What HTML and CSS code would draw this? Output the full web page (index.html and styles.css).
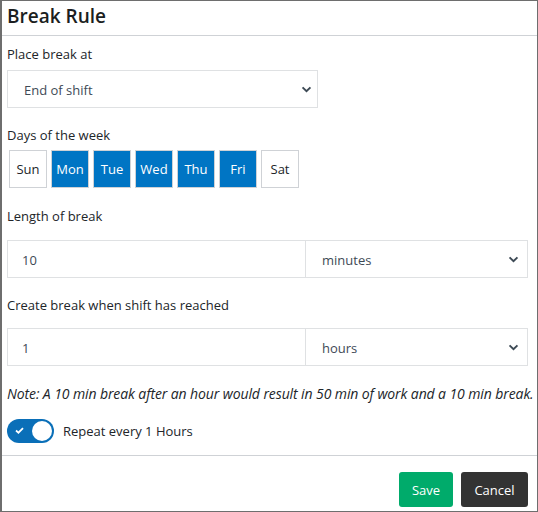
FILE: index.html
```html
<!DOCTYPE html>
<html>
<head>
<meta charset="utf-8">
<link rel="stylesheet" href="styles.css">
</head>
<body>
<div class="dialog">
  <div class="header"><h1 class="title">Break Rule</h1></div>
  <div class="body">
    <div class="label l1">Place break at</div>
    <div class="select select-place"><span>End of shift</span><svg class="chev" viewBox="0 0 12 8" width="11" height="7"><path d="M1.5 1.5 L6 6 L10.5 1.5" fill="none" stroke="#3d4a55" stroke-width="2.2"/></svg></div>

    <div class="label l2">Days of the week</div>
    <div class="days">
      <div class="day">Sun</div>
      <div class="day on">Mon</div>
      <div class="day on">Tue</div>
      <div class="day on">Wed</div>
      <div class="day on">Thu</div>
      <div class="day on">Fri</div>
      <div class="day">Sat</div>
    </div>

    <div class="label l3">Length of break</div>
    <div class="group g1">
      <div class="input">10</div>
      <div class="select select-unit"><span>minutes</span><svg class="chev" viewBox="0 0 12 8" width="11" height="7"><path d="M1.5 1.5 L6 6 L10.5 1.5" fill="none" stroke="#3d4a55" stroke-width="2.2"/></svg></div>
    </div>

    <div class="label l4">Create break when shift has reached</div>
    <div class="group g2">
      <div class="input">1</div>
      <div class="select select-unit"><span>hours</span><svg class="chev" viewBox="0 0 12 8" width="11" height="7"><path d="M1.5 1.5 L6 6 L10.5 1.5" fill="none" stroke="#3d4a55" stroke-width="2.2"/></svg></div>
    </div>

    <div class="note">Note: A 10 min break after an hour would result in 50 min of work and a 10 min break.</div>

    <div class="toggle-row">
      <div class="toggle">
        <svg class="check" viewBox="0 0 10 8" width="9" height="7"><path d="M1 4 L3.8 6.5 L9 1.2" fill="none" stroke="#fff" stroke-width="2"/></svg>
        <div class="knob"></div>
      </div>
      <span>Repeat every 1 Hours</span>
    </div>
  </div>
  <div class="footer">
    <button class="btn save">Save</button>
    <button class="btn cancel">Cancel</button>
  </div>
</div>
</body>
</html>
```
FILE: styles.css
```css
html, body {
  margin: 0;
  padding: 0;
  background: #fff;
}
body {
  font-family: "Open Sans", "Noto Sans", sans-serif;
  font-size: 13px;
  color: #212529;
}
.dialog {
  width: 538px;
  height: 512px;
  box-sizing: border-box;
  border: 1px solid #6e6e6e;
  border-left-width: 2px;
  display: flex;
  flex-direction: column;
}
.header {
  box-sizing: border-box;
  height: 35px;
  flex: none;
  border-bottom: 1px solid #cfd2d6;
  padding-left: 5px;
  display: flex;
  align-items: center;
}
.title {
  margin: 0;
  font-size: 19px;
  font-weight: 600;
  color: #1b1e21;
  line-height: 1;
  margin-top: -4px;
}
.body {
  padding: 0 9px 0 5px;
  flex: 1;
}
.label {
  height: 20px;
  line-height: 20px;
  color: #212529;
}
.l1 { margin-top: 8px; }
.l2 { margin-top: 17px; }
.l3 { margin-top: 18px; }
.l4 { margin-top: 17px; }
.select, .input {
  box-sizing: border-box;
  height: 38px;
  border: 1px solid #dfe1e3;
  display: flex;
  align-items: center;
  color: #3e4a56;
  padding-top: 1px;
}
.select-place {
  width: 311px;
  margin-top: 6px;
  padding-left: 16px;
  padding-right: 5px;
  justify-content: space-between;
}
.days {
  display: flex;
  gap: 4px;
  margin-top: 5px;
  margin-left: 2px;
}
.day {
  box-sizing: border-box;
  width: 38px;
  height: 38px;
  border: 1px solid #cfd2d6;
  display: flex;
  align-items: center;
  justify-content: center;
  color: #212529;
}
.day.on {
  background: #0075c4;
  color: #fff;
}
.group {
  display: flex;
}
.g1 { margin-top: 14px; }
.g2 { margin-top: 13px; }
.group .input {
  width: 298px;
  padding-left: 14px;
  border-right: none;
}
.group .select-unit {
  flex: 1;
  padding-left: 16px;
  padding-right: 8px;
  justify-content: space-between;
}
.note {
  margin-top: 18px;
  font-size: 14px;
  font-style: italic;
  line-height: 20px;
  white-space: nowrap;
  letter-spacing: -0.1px;
}
.toggle-row {
  margin-top: 15px;
  display: flex;
  align-items: center;
  gap: 9px;
}
.toggle {
  position: relative;
  box-sizing: border-box;
  width: 47px;
  height: 24px;
  border-radius: 12px;
  background: #0a6fb8;
}
.toggle .check {
  position: absolute;
  left: 8px;
  top: 8px;
}
.toggle .knob {
  position: absolute;
  right: 2px;
  top: 2px;
  width: 20px;
  height: 20px;
  border-radius: 50%;
  background: #fff;
}
.footer {
  box-sizing: border-box;
  flex: none;
  border-top: 1px solid #cfd2d6;
  height: 56px;
  display: flex;
  justify-content: flex-end;
  align-items: flex-end;
  gap: 8px;
  padding: 0 9px 4px 0;
}
.btn {
  font-family: inherit;
  font-size: 13px;
  border: none;
  border-radius: 3px;
  height: 35px;
  color: #fff;
  padding: 0;
  cursor: pointer;
}
.save {
  width: 54px;
  background: #00ab6b;
}
.cancel {
  width: 67px;
  background: #333;
}
```
